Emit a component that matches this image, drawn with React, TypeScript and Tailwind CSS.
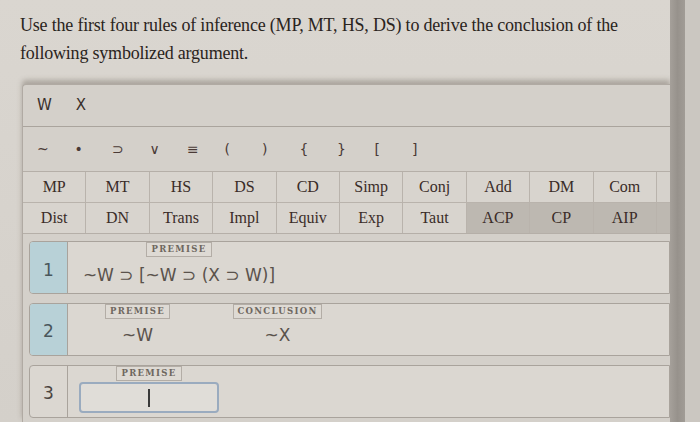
import React from "react";

const serif = { fontFamily: '"Liberation Serif", "Times New Roman", serif' };
const sans = { fontFamily: '"DejaVu Sans", "Liberation Sans", sans-serif' };
const tagFont = { fontFamily: '"DejaVu Serif", "Liberation Serif", serif' };

function Tag({ children }: { children: React.ReactNode }) {
  return (
    <div
      className="h-[15px] px-[4px] flex items-center justify-center border border-[#b3ada6] bg-[#dedad4] text-[8.5px] font-bold tracking-[1.3px] text-[#6e6760] leading-none"
      style={tagFont}
    >
      {children}
    </div>
  );
}

const rules1 = ["MP", "MT", "HS", "DS", "CD", "Simp", "Conj", "Add", "DM", "Com"];
const rules2 = ["Dist", "DN", "Trans", "Impl", "Equiv", "Exp", "Taut", "ACP", "CP", "AIP"];
const symbols = ["~", "•", "⊃", "∨", "≡", "(", ")", "{", "}", "[", "]"];

export default function App() {
  return (
    <div className="w-[700px] h-[422px] overflow-hidden flex bg-[#d8d4ce]">
      <div className="w-[670px] flex flex-col bg-gradient-to-b from-[#dad6d0] to-[#d4d0ca]">
        <div
          className="pl-[20px] pt-[11px] text-[18px] leading-[28px] text-[#2a2420] tracking-[-0.2px]"
          style={serif}
        >
          <p>Use the first four rules of inference (MP, MT, HS, DS) to derive the conclusion of the</p>
          <p>following symbolized argument.</p>
        </div>
        <div className="ml-[22px] mt-[17px] flex-1 flex flex-col bg-[#d4d0ca] border-t border-l border-[#b0aaa3] rounded-tl-[4px] shadow-[0_-4px_5px_rgba(90,80,70,0.35)]">
          <div className="h-[42px] flex items-center gap-[24px] pl-[14px] border-b border-[#aaa49d] text-[15px] text-[#3a302c]" style={sans}>
            <span>W</span>
            <span>X</span>
          </div>
          <div className="h-[45px] flex items-center pl-[14px] border-b border-[#b5afa8] text-[14px] text-[#4a3a36]" style={sans}>
            {symbols.map((s, i) => (
              <span key={i} className="w-[37.5px] text-left">
                {s}
              </span>
            ))}
          </div>
          <div className="grid grid-cols-[repeat(10,63.4px)_1fr] border-b border-[#b5afa8] text-[16px] text-[#3a2c28]" style={serif}>
            {rules1.map((r) => (
              <div key={r} className="h-[31px] flex items-center justify-center border-r border-b border-[#b9b3ac] bg-[#d8d4ce]">
                {r}
              </div>
            ))}
            <div className="h-[31px] border-b border-[#b9b3ac] bg-[#d6d2cc]" />
            {rules2.map((r, i) => (
              <div
                key={r}
                className={
                  i >= 7
                    ? "h-[30px] flex items-center justify-center border-r border-[#b9b3ac] bg-[#bdb8b1]"
                    : "h-[30px] flex items-center justify-center border-r border-[#b9b3ac] bg-[#d8d4ce]"
                }
              >
                {r}
              </div>
            ))}
            <div className="h-[30px] bg-[#bdb8b1]" />
          </div>
          <div className="flex flex-col gap-[9px] pl-[6px] pt-[7px]">
            {/* line 1 */}
            <div className="h-[53px] flex border border-[#a9a39c] rounded-l-[4px] bg-[#dbd7d1]">
              <div className="w-[38px] flex items-center justify-center pt-[6px] bg-[#b8d1d7] border-r border-[#a9a39c] rounded-l-[3px] text-[17px] text-[#4a575c]" style={sans}>
                1
              </div>
              <div className="flex-1 pl-[13px]">
                <div className="flex flex-col items-center w-[196px]">
                  <Tag>PREMISE</Tag>
                  <div className="mt-[6px] text-[17px] text-[#5a524c] whitespace-nowrap" style={sans}>
                    ~W ⊃ [~W ⊃ (X ⊃ W)]
                  </div>
                </div>
              </div>
            </div>
            {/* line 2 */}
            <div className="h-[53px] flex border border-[#a9a39c] rounded-l-[4px] bg-[#dbd7d1]">
              <div className="w-[38px] flex items-center justify-center pt-[4px] bg-[#b8d1d7] border-r border-[#a9a39c] rounded-l-[3px] text-[17px] text-[#4a575c]" style={sans}>
                2
              </div>
              <div className="flex-1 flex pl-[36px]">
                <div className="flex flex-col items-center w-[67px]">
                  <Tag>PREMISE</Tag>
                  <div className="mt-[4px] text-[17px] text-[#5a524c]" style={sans}>~W</div>
                </div>
                <div className="ml-[57px] flex flex-col items-center w-[99px]">
                  <Tag>CONCLUSION</Tag>
                  <div className="mt-[4px] text-[17px] text-[#5a524c]" style={sans}>~X</div>
                </div>
              </div>
            </div>
            {/* line 3 */}
            <div className="h-[53px] flex border border-[#a9a39c] rounded-l-[4px] bg-[#dbd7d1]">
              <div className="w-[38px] flex items-center justify-center pt-[4px] border-r border-[#a9a39c] rounded-l-[3px] text-[17px] text-[#4a4440]" style={sans}>
                3
              </div>
              <div className="flex-1 pl-[11px]">
                <div className="flex flex-col items-center w-[140px]">
                  <Tag>PREMISE</Tag>
                  <div className="mt-[1px] w-[140px] h-[31px] rounded-[4px] border-2 border-[#9aabbf] bg-[#e0ddd8] flex items-center justify-center">
                    <div className="w-[2px] h-[18px] bg-[#3a3a3a]" />
                  </div>
                </div>
              </div>
            </div>
          </div>
        </div>
      </div>
      <div className="w-[15px] bg-gradient-to-r from-[#a5a09a] via-[#97928c] to-[#a19c96]" />
      <div className="flex-1 bg-[#cbc7c1]" />
    </div>
  );
}
